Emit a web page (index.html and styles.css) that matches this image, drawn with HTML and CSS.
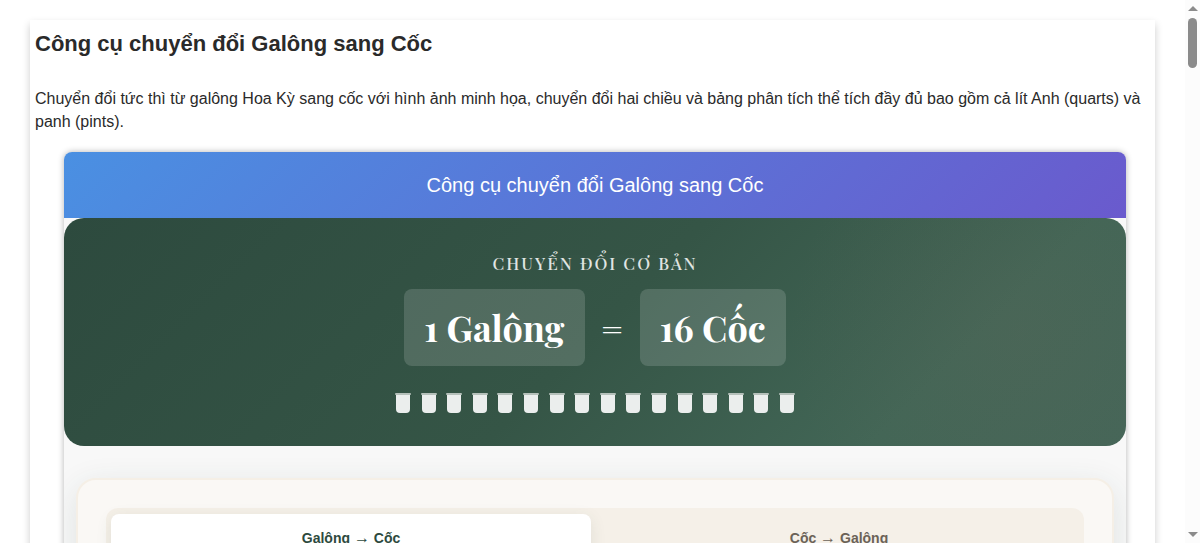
FILE: index.html
```html
<!DOCTYPE html>
<html lang="vi">
<head>
    <meta charset="UTF-8">
    <meta name="viewport" content="width=device-width, initial-scale=1.0">
    <title>Công cụ chuyển đổi Galông sang Cốc</title>
    <link rel="stylesheet" href="styles.css">
</head>
<body>
    <div class="page">
        <main class="container">
            <h1>Công cụ chuyển đổi Galông sang Cốc</h1>
            <p class="intro">Chuyển đổi tức thì từ galông Hoa Kỳ sang cốc với hình ảnh minh họa, chuyển đổi hai chiều và bảng phân tích thể tích đầy đủ bao gồm cả lít Anh (quarts) và panh (pints).</p>

            <section class="widget">
                <div class="widget-header">Công cụ chuyển đổi Galông sang Cốc</div>

                <div class="hero">
                    <div class="hero-label">Chuyển đổi cơ bản</div>
                    <div class="equation">
                        <span class="amount">1 Galông</span>
                        <span class="equals">=</span>
                        <span class="amount">16 Cốc</span>
                    </div>
                    <div class="cups">
                        <span class="cup"></span>
                        <span class="cup"></span>
                        <span class="cup"></span>
                        <span class="cup"></span>
                        <span class="cup"></span>
                        <span class="cup"></span>
                        <span class="cup"></span>
                        <span class="cup"></span>
                        <span class="cup"></span>
                        <span class="cup"></span>
                        <span class="cup"></span>
                        <span class="cup"></span>
                        <span class="cup"></span>
                        <span class="cup"></span>
                        <span class="cup"></span>
                        <span class="cup"></span>
                    </div>
                </div>

                <div class="card">
                    <div class="tabs">
                        <button type="button" class="tab active">Galông <span class="tab-arrow">→</span> Cốc</button>
                        <button type="button" class="tab">Cốc <span class="tab-arrow">→</span> Galông</button>
                    </div>
                </div>
            </section>
        </main>
    </div>

    <div class="scrollbar" aria-hidden="true">
        <span class="arrow arrow-up"></span>
        <span class="thumb"></span>
        <span class="arrow arrow-down"></span>
    </div>
</body>
</html>
```

FILE: styles.css
```css
* {
    box-sizing: border-box;
}

body {
    display: flex;
    height: 100vh;
    margin: 0;
    overflow: hidden;
    background-color: #fff;
    color: #2a2a2a;
    font-family: "Liberation Sans", Arial, sans-serif;
    font-size: 16px;
    line-height: 23px;
}

.page {
    flex: 1;
    padding: 20px 30px 0;
    overflow: hidden;
}

.container {
    padding: 5px;
    background-color: #fff;
    box-shadow: 0 4px 8px rgba(0, 0, 0, 0.2);
}

h1 {
    margin: 0 0 24px;
    font-size: 22px;
    line-height: 38px;
}

.intro {
    margin: 0 0 19px;
}

/* Converter widget */
.widget {
    margin: 0 24px 0 29px;
    border-radius: 8px;
    background-color: #f8f8f8;
    box-shadow: 0 0 6px rgba(0, 0, 0, 0.3);
    overflow: hidden;
}

.widget-header {
    padding: 20px;
    background: linear-gradient(135deg, #4a90e2, #6a5acd);
    color: #fff;
    font-size: 20px;
    line-height: 26px;
    text-align: center;
}

.hero {
    display: flex;
    flex-direction: column;
    align-items: center;
    padding: 32px;
    border-radius: 20px;
    background:
        radial-gradient(circle at 90% 50%, rgba(120, 100, 90, 0.14), transparent 24%),
        linear-gradient(135deg, #2d4a3e, #355546 50%, #426656 80%, #446658);
    color: #fff;
    font-family: "Playfair Display", "Liberation Serif", serif;
}

.hero-label {
    margin-bottom: 12px;
    font-size: 17px;
    font-weight: 500;
    line-height: 27px;
    letter-spacing: 2px;
    text-transform: uppercase;
    opacity: 0.85;
}

.equation {
    display: flex;
    align-items: center;
    gap: 16px;
    margin-bottom: 27px;
}

.amount {
    padding: 12px 20px;
    border-radius: 8px;
    background-color: rgba(255, 255, 255, 0.15);
    font-size: 36px;
    font-weight: 700;
    line-height: 53px;
}

.equals {
    font-size: 36px;
    font-weight: 500;
    line-height: 40px;
}

/* Measuring cups */
.cups {
    display: flex;
    justify-content: space-between;
    width: 398px;
    max-width: 100%;
    height: 21px;
}

.cup {
    position: relative;
    width: 14px;
    height: 20px;
    border-radius: 2px 2px 4px 4px;
    background-color: #ebeeed;
}

.cup::before {
    content: "";
    position: absolute;
    top: 0;
    left: -1px;
    width: 16px;
    height: 2px;
    border-radius: 2px;
    background-color: #b5c0ba;
}

/* Form card */
.card {
    margin: 32px 12px;
    padding: 28px;
    min-height: 200px;
    border: 2px solid #f5efe6;
    border-radius: 20px;
    background-color: #faf8f5;
    box-shadow: 0 8px 32px rgba(45, 74, 62, 0.12);
}

.tabs {
    display: flex;
    gap: 8px;
    padding: 6px 5px;
    border-radius: 12px;
    background-color: #f5f0e8;
}

.tab {
    flex: 1;
    padding: 12px;
    border: none;
    border-radius: 8px;
    background: transparent;
    color: #6b6257;
    font-family: inherit;
    font-size: 14px;
    font-weight: 700;
    line-height: 24px;
    cursor: pointer;
}

.tab-arrow {
    font-family: "Liberation Serif", serif;
    font-size: 16px;
    font-weight: 400;
    line-height: 16px;
}

.tab.active {
    background-color: #fff;
    color: #2d4a3e;
    box-shadow: 0 4px 16px rgba(45, 74, 62, 0.1);
}

/* Page scrollbar */
.scrollbar {
    display: flex;
    flex-direction: column;
    align-items: center;
    width: 15px;
    padding: 6px 0;
    background-color: #fcfcfc;
}

.arrow {
    border: 5px solid transparent;
}

.arrow-up {
    border-top: none;
    border-bottom-color: #8b8b8b;
}

.thumb {
    width: 9px;
    height: 50px;
    margin-top: 7px;
    border-radius: 5px;
    background-color: #8b8b8b;
}

.arrow-down {
    margin-top: auto;
    border-bottom: none;
    border-top-color: #8b8b8b;
}
```
